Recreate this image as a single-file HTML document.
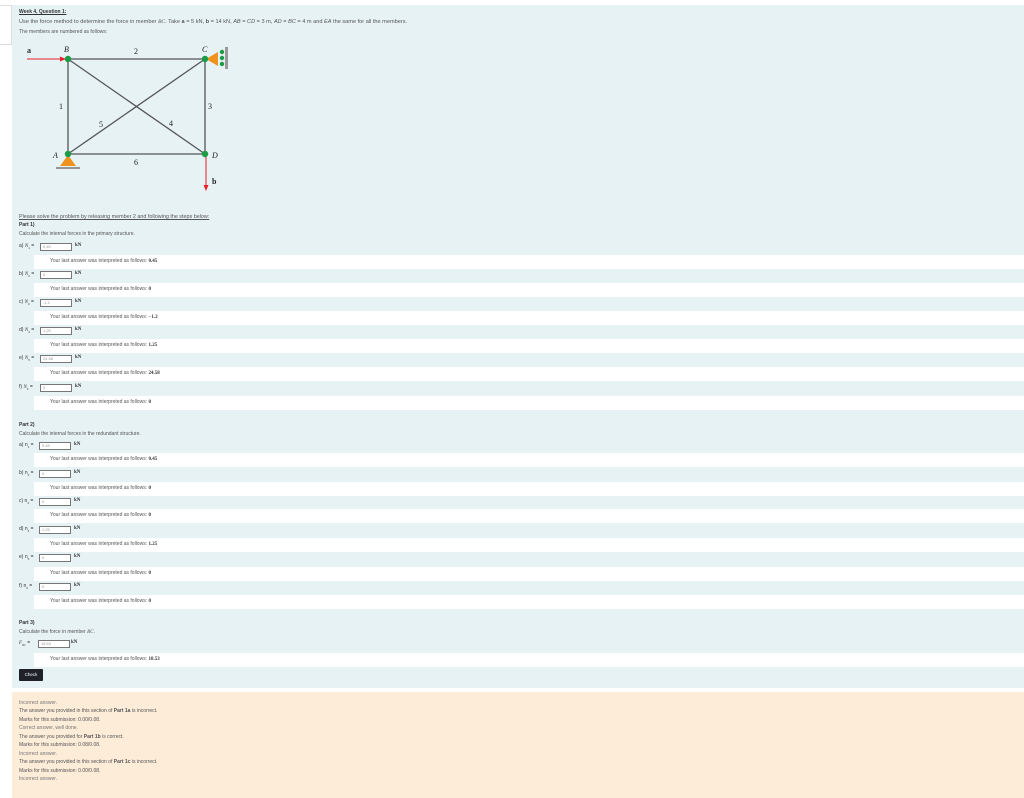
<!DOCTYPE html>
<html><head><meta charset="utf-8"><style>
body{margin:0;width:1024px;height:798px;overflow:hidden;background:#fff;font-family:"Liberation Sans",sans-serif;position:relative}
.a{position:absolute;white-space:nowrap}
.t{font-size:5px;color:#555}
.lbl{font-size:5px;color:#333}
.strip{position:absolute;left:34px;right:0;height:14px;background:#fff}
.inp{position:absolute;width:32px;height:8px;border:1px solid #777;background:#fff;font-size:4px;color:#999;line-height:6px;padding-left:2px;box-sizing:border-box;overflow:hidden}
.kn{position:absolute;font-family:"Liberation Serif",serif;font-size:5px;color:#333;font-weight:bold}
.serif{font-family:"Liberation Serif",serif}
sub{font-size:3px;line-height:0}
</style></head><body>
<div style="position:absolute;left:0;top:5px;width:12px;height:40px;border:1px solid #ddd;border-left:none;box-sizing:border-box"></div>
<div style="position:absolute;left:12px;top:5px;right:0;height:683px;background:#e7f2f4"></div>
<div style="position:absolute;left:12px;top:692px;right:0;bottom:0;background:#fcecd8"></div>

<div class="a" style="left:19px;top:9px;font-size:5px;color:#333;font-weight:bold;text-decoration:underline">Week 4, Question 1:</div>
<div class="a t" style="left:19px;top:19px;font-size:5.6px">Use the force method to determine the force in member <i class="serif">BC</i>. Take <b>a</b> = 5 kN, <b>b</b> = 14 kN, <i>AB</i> = <i>CD</i> = 3 m, <i>AD</i> = <i>BC</i> = 4 m and <i>EA</i> the same for all the members.</div>
<div class="a t" style="left:19px;top:29px">The members are numbered as follows:</div>

<svg style="position:absolute;left:0;top:0" width="240" height="200">
<g stroke="#555" stroke-width="1.3" fill="none">
<line x1="68" y1="59" x2="205" y2="59"/><line x1="68" y1="154" x2="205" y2="154"/>
<line x1="68" y1="59" x2="68" y2="154"/><line x1="205" y1="59" x2="205" y2="154"/>
<line x1="68" y1="59" x2="205" y2="154"/><line x1="68" y1="154" x2="205" y2="59"/>
</g>
<line x1="27" y1="59" x2="62" y2="59" stroke="#e8202a" stroke-width="1"/>
<polygon points="66,59 60,56.5 60,61.5" fill="#e8202a"/>
<line x1="206" y1="156" x2="206" y2="186" stroke="#e8202a" stroke-width="1"/>
<polygon points="206,191 203.5,185 208.5,185" fill="#e8202a"/>
<polygon points="68,155 60,166 76,166" fill="#f0921e"/>
<line x1="56" y1="168" x2="80" y2="168" stroke="#777" stroke-width="1.5"/>
<polygon points="206,59 218,52 218,66" fill="#f0921e"/>
<rect x="225" y="47" width="3" height="22" fill="#999"/>
<circle cx="222" cy="52" r="2.2" fill="#1a9b45"/><circle cx="222" cy="58" r="2.2" fill="#1a9b45"/><circle cx="222" cy="64" r="2.2" fill="#1a9b45"/>
<circle cx="68" cy="59" r="3.2" fill="#1a9b45"/><circle cx="205" cy="59" r="3.2" fill="#1a9b45"/>
<circle cx="68" cy="154" r="3.2" fill="#1a9b45"/><circle cx="205" cy="154" r="3.2" fill="#1a9b45"/>
<g font-family="Liberation Serif,serif" font-size="8" fill="#222">
<text x="27" y="53" font-weight="bold">a</text>
<text x="64" y="52" font-style="italic">B</text><text x="202" y="52" font-style="italic">C</text>
<text x="53" y="158" font-style="italic">A</text><text x="212" y="158" font-style="italic">D</text>
<text x="134" y="54">2</text><text x="59" y="109">1</text><text x="208" y="109">3</text>
<text x="99" y="127">5</text><text x="169" y="126">4</text><text x="134" y="165">6</text>
<text x="212" y="184" font-weight="bold">b</text>
</g></svg>

<div class="a t" style="left:19px;top:214px;font-size:5.4px;text-decoration:underline">Please solve the problem by releasing member 2 and following the steps below:</div>
<div class="a lbl" style="left:19px;top:222px;font-weight:bold">Part 1)</div>
<div class="a t" style="left:19px;top:231px">Calculate the internal forces in the primary structure.</div>

<div class="a lbl" style="left:19px;top:243px">a) <i class="serif">N</i><sub>1</sub> =</div><div class="inp" style="left:40px;top:243px">0.45</div><div class="kn" style="left:75px;top:243px">kN</div>
<div class="strip" style="top:255px"></div><div class="a t" style="left:50px;top:258px">Your last answer was interpreted as follows: <b class="serif" style="color:#333">0.45</b></div>
<div class="a lbl" style="left:19px;top:271px">b) <i class="serif">N</i><sub>2</sub> =</div><div class="inp" style="left:40px;top:271px">0</div><div class="kn" style="left:75px;top:271px">kN</div>
<div class="strip" style="top:283px"></div><div class="a t" style="left:50px;top:286px">Your last answer was interpreted as follows: <b class="serif" style="color:#333">0</b></div>
<div class="a lbl" style="left:19px;top:299px">c) <i class="serif">N</i><sub>3</sub> =</div><div class="inp" style="left:40px;top:299px">-1.2</div><div class="kn" style="left:75px;top:299px">kN</div>
<div class="strip" style="top:311px"></div><div class="a t" style="left:50px;top:314px">Your last answer was interpreted as follows: <b class="serif" style="color:#333">−1.2</b></div>
<div class="a lbl" style="left:19px;top:327px">d) <i class="serif">N</i><sub>4</sub> =</div><div class="inp" style="left:40px;top:327px">1.25</div><div class="kn" style="left:75px;top:327px">kN</div>
<div class="strip" style="top:339px"></div><div class="a t" style="left:50px;top:342px">Your last answer was interpreted as follows: <b class="serif" style="color:#333">1.25</b></div>
<div class="a lbl" style="left:19px;top:355px">e) <i class="serif">N</i><sub>5</sub> =</div><div class="inp" style="left:40px;top:355px">24.58</div><div class="kn" style="left:75px;top:355px">kN</div>
<div class="strip" style="top:367px"></div><div class="a t" style="left:50px;top:370px">Your last answer was interpreted as follows: <b class="serif" style="color:#333">24.58</b></div>
<div class="a lbl" style="left:19px;top:384px">f) <i class="serif">N</i><sub>6</sub> =</div><div class="inp" style="left:40px;top:384px">0</div><div class="kn" style="left:75px;top:384px">kN</div>
<div class="strip" style="top:396px"></div><div class="a t" style="left:50px;top:399px">Your last answer was interpreted as follows: <b class="serif" style="color:#333">0</b></div>

<div class="a lbl" style="left:19px;top:422px;font-weight:bold">Part 2)</div>
<div class="a t" style="left:19px;top:431px">Calculate the internal forces in the redundant structure.</div>
<div class="a lbl" style="left:19px;top:442px">a) n<sub>1</sub> =</div><div class="inp" style="left:39px;top:442px">0.45</div><div class="kn" style="left:74px;top:442px">kN</div>
<div class="strip" style="top:453px"></div><div class="a t" style="left:50px;top:456px">Your last answer was interpreted as follows: <b class="serif" style="color:#333">0.45</b></div>
<div class="a lbl" style="left:19px;top:470px">b) n<sub>2</sub> =</div><div class="inp" style="left:39px;top:470px">0</div><div class="kn" style="left:74px;top:470px">kN</div>
<div class="strip" style="top:482px"></div><div class="a t" style="left:50px;top:485px">Your last answer was interpreted as follows: <b class="serif" style="color:#333">0</b></div>
<div class="a lbl" style="left:19px;top:498px">c) n<sub>3</sub> =</div><div class="inp" style="left:39px;top:498px">0</div><div class="kn" style="left:74px;top:498px">kN</div>
<div class="strip" style="top:509px"></div><div class="a t" style="left:50px;top:512px">Your last answer was interpreted as follows: <b class="serif" style="color:#333">0</b></div>
<div class="a lbl" style="left:19px;top:526px">d) n<sub>4</sub> =</div><div class="inp" style="left:39px;top:526px">1.25</div><div class="kn" style="left:74px;top:526px">kN</div>
<div class="strip" style="top:538px"></div><div class="a t" style="left:50px;top:541px">Your last answer was interpreted as follows: <b class="serif" style="color:#333">1.25</b></div>
<div class="a lbl" style="left:19px;top:554px">e) n<sub>5</sub> =</div><div class="inp" style="left:39px;top:554px">0</div><div class="kn" style="left:74px;top:554px">kN</div>
<div class="strip" style="top:567px"></div><div class="a t" style="left:50px;top:570px">Your last answer was interpreted as follows: <b class="serif" style="color:#333">0</b></div>
<div class="a lbl" style="left:19px;top:583px">f) n<sub>6</sub> =</div><div class="inp" style="left:39px;top:583px">0</div><div class="kn" style="left:74px;top:583px">kN</div>
<div class="strip" style="top:595px"></div><div class="a t" style="left:50px;top:598px">Your last answer was interpreted as follows: <b class="serif" style="color:#333">0</b></div>

<div class="a lbl" style="left:19px;top:620px;font-weight:bold">Part 3)</div>
<div class="a t" style="left:19px;top:629px">Calculate the force in member <i class="serif">BC</i>.</div>
<div class="a lbl" style="left:19px;top:640px"><i class="serif">F<sub>BC</sub></i> =</div><div class="inp" style="left:38px;top:640px">18.53</div><div class="kn" style="left:71px;top:640px">kN</div>
<div class="strip" style="top:653px"></div><div class="a t" style="left:50px;top:656px">Your last answer was interpreted as follows: <b class="serif" style="color:#333">18.53</b></div>
<div style="position:absolute;left:19px;top:669px;width:24px;height:12px;background:#1e2128;border-radius:1px;color:#fff;font-size:4.5px;line-height:12px;text-align:center">Check</div>

<div class="a t" style="left:19px;top:700px;color:#777">Incorrect answer.</div>
<div class="a t" style="left:19px;top:708px">The answer you provided in this section of <b>Part 1a</b> is incorrect.</div>
<div class="a t" style="left:19px;top:717px">Marks for this submission: 0.00/0.08.</div>
<div class="a t" style="left:19px;top:725px;color:#777">Correct answer, well done.</div>
<div class="a t" style="left:19px;top:734px">The answer you provided for <b>Part 1b</b> is correct.</div>
<div class="a t" style="left:19px;top:742px">Marks for this submission: 0.08/0.08.</div>
<div class="a t" style="left:19px;top:751px;color:#777">Incorrect answer.</div>
<div class="a t" style="left:19px;top:759px">The answer you provided in this section of <b>Part 1c</b> is incorrect.</div>
<div class="a t" style="left:19px;top:768px">Marks for this submission: 0.00/0.08.</div>
<div class="a t" style="left:19px;top:776px;color:#777">Incorrect answer.</div>
</body></html>
